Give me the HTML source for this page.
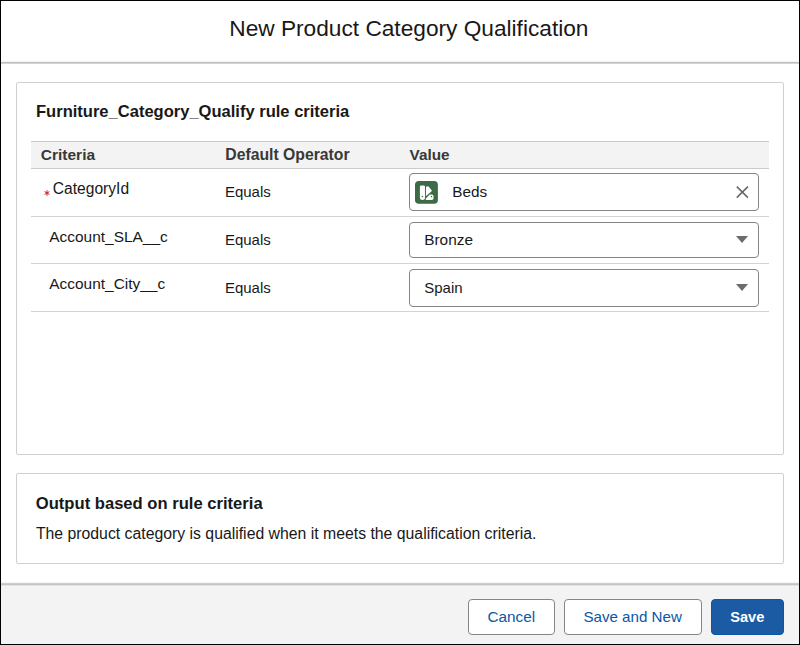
<!DOCTYPE html>
<html><head><meta charset="utf-8">
<style>
html,body{margin:0;padding:0;}
body{width:800px;height:645px;position:relative;overflow:hidden;background:#fff;font-family:"Liberation Sans",sans-serif;}
.t{position:absolute;white-space:nowrap;}
.b{position:absolute;box-sizing:border-box;}
</style></head><body>
<div class="b" style="left:1px;top:61px;width:798px;height:1px;background:#f2f2f2;"></div>
<div class="b" style="left:1px;top:62px;width:798px;height:1px;background:#c2c2c2;"></div>
<div class="b" style="left:1px;top:63px;width:798px;height:1px;background:#d4d4d4;"></div>
<div class="b" style="left:16px;top:82px;width:768px;height:373px;border:1px solid #cfcfcf;border-radius:2px;"></div>
<div class="b" style="left:31px;top:141px;width:738px;height:28px;background:#f3f3f3;border-top:1px solid #cbcbcb;border-bottom:1px solid #cbcbcb;"></div>
<div class="b" style="left:31px;top:216px;width:738px;height:1px;background:#d3d3d3;"></div>
<div class="b" style="left:31px;top:263px;width:738px;height:1px;background:#d3d3d3;"></div>
<div class="b" style="left:31px;top:311px;width:738px;height:1px;background:#d3d3d3;"></div>
<div class="b" style="left:409px;top:173px;width:350.3px;height:38px;border:1px solid #858585;border-radius:4px;"></div>
<div class="b" style="left:409px;top:222px;width:350.3px;height:36px;border:1px solid #858585;border-radius:4px;"></div>
<div class="b" style="left:409px;top:269px;width:350.3px;height:38px;border:1px solid #858585;border-radius:4px;"></div>
<svg class="b" style="left:415.3px;top:180.8px" width="22.9" height="22.8" viewBox="0 0 22.9 22.8">
<rect x="0" y="0" width="22.9" height="22.8" rx="3.8" fill="#3d6b47"/>
<path d="M4.9 5.8Q4.9 4.4 6.3 4.4H8.6Q10.0 4.4 10.0 5.8V16.4Q10.0 18.9 7.45 18.9Q4.9 18.9 4.9 16.4Z" fill="#fff"/>
<circle cx="7.45" cy="15.6" r="0.75" fill="#3d6b47"/>
<path d="M11.0 5.8L13.3 5.3L17.0 9.8L12.2 14.6L10.9 15.0Z" fill="#fff"/>
<path d="M10.9 18.9H16.9Q18.5 18.9 18.5 17.3V15.1Q18.5 13.5 16.9 13.5H14.8L10.9 17.6Z" fill="#fff"/>
<path d="M10.6 16.2L13.9 12.6" stroke="#3d6b47" stroke-width="0.6"/>
<circle cx="16.5" cy="15.6" r="0.75" fill="#3d6b47"/>
</svg>
<svg class="b" style="left:43.95px;top:189.7px" width="6" height="6" viewBox="-3 -3 6 6">
<path d="M0 -2.4V2.4M-2.08 -1.2L2.08 1.2M-2.08 1.2L2.08 -1.2" stroke="#d0202e" stroke-width="1.0" stroke-linecap="round"/>
</svg>
<svg class="b" style="left:730px;top:180px" width="24" height="24" viewBox="0 0 24 24"><path d="M6.8 6.6L17.9 17.6M17.9 6.6L6.8 17.6" stroke="#666" stroke-width="1.5" fill="none"/></svg>
<svg class="b" style="left:736.2px;top:236.2px" width="12" height="7" viewBox="0 0 12 7"><path d="M0 0H12L6 7Z" fill="#6b6b6b"/></svg>
<svg class="b" style="left:736.2px;top:283.7px" width="12" height="7" viewBox="0 0 12 7"><path d="M0 0H12L6 7Z" fill="#6b6b6b"/></svg>
<div class="b" style="left:16px;top:473px;width:768px;height:91px;border:1px solid #cfcfcf;border-radius:2px;"></div>
<div class="b" style="left:1px;top:584px;width:798px;height:60px;background:#f3f3f3;"></div>
<div class="b" style="left:1px;top:582px;width:798px;height:1px;background:#f5f5f5;"></div>
<div class="b" style="left:1px;top:583px;width:798px;height:1px;background:#cdcdcd;"></div>
<div class="b" style="left:1px;top:584px;width:798px;height:1px;background:#c4c4c4;"></div>
<div class="b" style="left:1px;top:585px;width:798px;height:1px;background:#e4e4e4;"></div>
<div class="b" style="left:468px;top:598.5px;width:87px;height:36px;background:#fff;border:1px solid #858585;border-radius:4px;"></div>
<div class="b" style="left:564px;top:598.5px;width:138px;height:36px;background:#fff;border:1px solid #858585;border-radius:4px;"></div>
<div class="b" style="left:711px;top:598.5px;width:73px;height:36px;background:#1b5ba4;border:1px solid #0b57a6;border-radius:4px;"></div>
<div class="b" style="left:0px;top:0px;width:800px;height:1px;background:#000;"></div>
<div class="b" style="left:0px;top:643.5px;width:800px;height:1.5px;background:#000;"></div>
<div class="b" style="left:0px;top:0px;width:1.2px;height:645px;background:#000;"></div>
<div class="b" style="left:798.8px;top:0px;width:1.2px;height:645px;background:#000;"></div>
<div class="t" style="left:229.30px;top:15px;line-height:26px;font-size:22.68px;color:#181818;">New Product Category Qualification</div>
<div class="t" style="left:36.00px;top:102px;line-height:19px;font-size:16.55px;font-weight:bold;color:#181818;">Furniture_Category_Qualify rule criteria</div>
<div class="t" style="left:40.80px;top:146px;line-height:17px;font-size:15.5px;font-weight:bold;color:#383838;">Criteria</div>
<div class="t" style="left:225.30px;top:146px;line-height:17px;font-size:15.75px;font-weight:bold;color:#383838;">Default Operator</div>
<div class="t" style="left:409.60px;top:146px;line-height:17px;font-size:15.3px;font-weight:bold;color:#383838;">Value</div>
<div class="t" style="left:52.80px;top:180px;line-height:17px;font-size:15.6px;color:#181818;">CategoryId</div>
<div class="t" style="left:224.90px;top:183px;line-height:17px;font-size:15.0px;color:#181818;">Equals</div>
<div class="t" style="left:452.20px;top:183px;line-height:17px;font-size:15.3px;color:#181818;">Beds</div>
<div class="t" style="left:49.30px;top:228px;line-height:17px;font-size:15.45px;color:#181818;">Account_SLA__c</div>
<div class="t" style="left:224.90px;top:231px;line-height:17px;font-size:15.0px;color:#181818;">Equals</div>
<div class="t" style="left:424.20px;top:231px;line-height:17px;font-size:15.4px;color:#181818;">Bronze</div>
<div class="t" style="left:49.30px;top:275px;line-height:17px;font-size:15.45px;color:#181818;">Account_City__c</div>
<div class="t" style="left:224.90px;top:279px;line-height:17px;font-size:15.0px;color:#181818;">Equals</div>
<div class="t" style="left:424.20px;top:279px;line-height:17px;font-size:15.0px;color:#181818;">Spain</div>
<div class="t" style="left:35.80px;top:494px;line-height:19px;font-size:16.6px;font-weight:bold;color:#181818;">Output based on rule criteria</div>
<div class="t" style="left:35.90px;top:525px;line-height:17px;font-size:15.8px;color:#181818;">The product category is qualified when it meets the qualification criteria.</div>
<div class="t" style="left:487.50px;top:608px;line-height:17px;font-size:15.3px;color:#0b57a8;">Cancel</div>
<div class="t" style="left:583.40px;top:608px;line-height:17px;font-size:15.15px;color:#0b57a8;">Save and New</div>
<div class="t" style="left:730.20px;top:609px;line-height:16px;font-size:14.6px;font-weight:bold;color:#ffffff;">Save</div>
</body></html>
